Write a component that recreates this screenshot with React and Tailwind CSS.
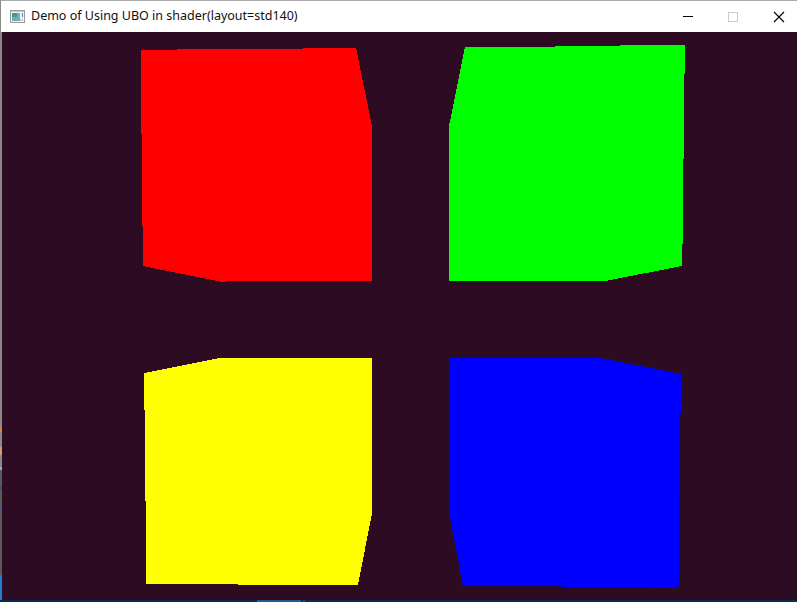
import React from 'react';

const quads = [
  { color: '#ff0000', points: '141,18 177,18 177,17 303,17 303,16 356,16 372,94 372,249 229,249 222,250 143,234 143,194 142,194 142,102 141,102' },
  { color: '#00ff00', points: '465,15 555,15 555,14 685,13 685,42 684,42 684,127 683,127 683,212 682,212 682,234 605,249 449,249 449,94' },
  { color: '#ffff00', points: '144,341 219,326 372,326 372,481 358,553 238,553 238,552 146,552 146,469 145,469 145,378 144,378' },
  { color: '#0000ff', points: '449,326 601,326 681,342 681,381 680,381 680,466 679,466 679,551 678,556 625,555 496,554 463,554 449,480' },
];

const AppIcon = () => (
  <svg width="15" height="13" viewBox="0 0 15 13" className="shrink-0">
    <rect x="0.5" y="0.5" width="14" height="12" fill="#f4f4f4" stroke="#9a9a9a" />
    <rect x="1" y="1" width="13" height="1" fill="#c8c8c8" />
    <rect x="2" y="3" width="8" height="8" fill="#6fb3a4" />
    <rect x="2" y="3" width="5" height="4" fill="#4f8fa0" />
    <rect x="12" y="3" width="1" height="4" fill="#3b7ec0" />
    <rect x="10" y="9" width="3" height="2" fill="#d0d0d0" />
  </svg>
);

export default function App() {
  return (
    <div className="w-[797px] h-[602px] flex flex-col overflow-hidden bg-[#2d0c23] font-['Liberation_Sans',sans-serif]">
      <div className="h-[32px] shrink-0 flex items-center bg-white border-t border-t-[#a9a9a9] border-l border-l-[#8c8c8c] pl-[9px] pr-[12px]">
        <AppIcon />
        <span className="ml-[6px] text-[12.5px] text-[#111111] whitespace-nowrap font-['Noto_Sans',sans-serif]">
          Demo of Using UBO in shader(layout=std140)
        </span>
        <div className="ml-auto flex items-center gap-[35px]">
          <div className="w-[10px] h-px bg-black" />
          <div className="w-[10px] h-[10px] border border-[#cccccc]" />
          <svg width="12" height="12" viewBox="0 0 12 12" className="text-black">
            <path d="M1 1L11 11M11 1L1 11" stroke="currentColor" strokeWidth="1.1" fill="none" />
          </svg>
        </div>
      </div>
      <div className="flex-1 min-h-0 flex">
        {/* desktop showing through along the left edge of the window */}
        <div className="w-[2px] shrink-0 flex flex-col">
          <div className="h-[396px] bg-[#8a8a8a]" />
          <div className="h-[4px] bg-[#d08a3c]" />
          <div className="h-[15px] bg-[#8a8a8a]" />
          <div className="h-[8px] bg-[#c9a26a]" />
          <div className="h-[12px] bg-[#8a8a8a]" />
          <div className="h-[3px] bg-[#8fb0c8]" />
          <div className="h-[17px] bg-[#5a5a5a]" />
          <div className="h-[2px] bg-[#2a4a9a]" />
          <div className="h-[18px] bg-[#5a5a5a]" />
          <div className="h-[3px] bg-[#2f63c0]" />
          <div className="h-[65px] bg-[#5a5a5a]" />
          <div className="h-[25px] bg-[#1f7fd0]" />
        </div>
        <svg width="795" height="568" viewBox="2 0 795 568" shapeRendering="crispEdges" className="block">
          {quads.map((q) => (
            <polygon key={q.color} points={q.points} fill={q.color} />
          ))}
        </svg>
      </div>
      <div className="h-[2px] shrink-0 flex bg-[#0a2a52]">
        <div className="ml-[257px] w-[44px] bg-[#1f5a94]" />
        <div className="ml-[2px] w-[2px] bg-[#17457a]" />
      </div>
    </div>
  );
}
